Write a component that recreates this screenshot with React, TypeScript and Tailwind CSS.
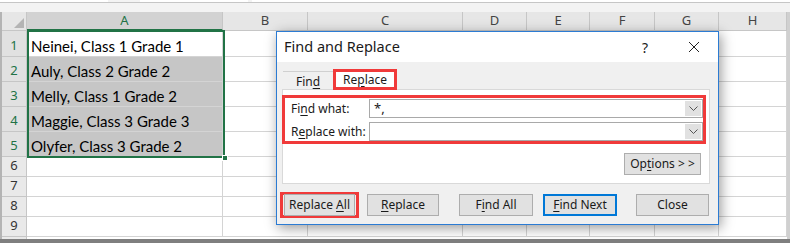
import type { ReactNode } from "react";

const columns = [
    { label: "A", width: 196 },
    { label: "B", width: 85 },
    { label: "C", width: 155 },
    { label: "D", width: 64 },
    { label: "E", width: 63 },
    { label: "F", width: 65 },
    { label: "G", width: 64 },
    { label: "H", width: 68 },
];

const rows = [
    { n: 1, h: 26, text: "Neinei, Class 1 Grade 1" },
    { n: 2, h: 25, text: "Auly, Class 2 Grade 2" },
    { n: 3, h: 25, text: "Melly, Class 1 Grade 2" },
    { n: 4, h: 25, text: "Maggie, Class 3 Grade 3" },
    { n: 5, h: 25, text: "Olyfer, Class 3 Grade 2" },
    { n: 6, h: 20, text: "" },
    { n: 7, h: 20, text: "" },
    { n: 8, h: 20, text: "" },
    { n: 9, h: 20, text: "" },
];

function Key({ children }: { children: ReactNode }) {
    return <span className="underline underline-offset-[2px]">{children}</span>;
}

function Chevron() {
    return (
        <svg width="9" height="6" viewBox="0 0 9 6">
            <path d="M0.5 0.5 L4.5 4.5 L8.5 0.5" fill="none" stroke="#555" strokeWidth="1" />
        </svg>
    );
}

function ComboInput({ value }: { value: string }) {
    return (
        <div className="flex h-[19px] flex-1 items-stretch border border-[#a9a9a9] bg-white">
            <div className="flex-1 pl-[4px] text-[13px] leading-[17px]">{value}</div>
            <div className="my-[1px] mr-[1px] flex w-[16px] items-center justify-center bg-[#e1e1e1]">
                <Chevron />
            </div>
        </div>
    );
}

function DialogButton({
    children,
    className = "",
    border = "border border-[#adadad]",
}: {
    children: ReactNode;
    className?: string;
    border?: string;
}) {
    return (
        <div
            className={`flex h-[22px] items-center justify-center bg-[#e1e1e1] text-[12px] ${border} ${className}`}
        >
            <span className="whitespace-pre">{children}</span>
        </div>
    );
}

function FindReplaceDialog() {
    return (
        <div className="absolute left-[276px] top-[31px] flex h-[194px] w-[443px] flex-col border border-[#2b7bd3] bg-[#f0f0f0] text-[#1a1a1a] shadow-[2px_3px_12px_rgba(0,0,0,0.4)]">
            <div className="flex h-[30px] items-center bg-white pl-[7px] text-[14.5px]">
                <span>Find and Replace</span>
                <span className="ml-auto mr-[40px] text-[14px]">?</span>
                <svg width="12" height="12" viewBox="0 0 12 12" className="mr-[18px]">
                    <path d="M1 1 L11 11 M11 1 L1 11" stroke="#222" strokeWidth="1" />
                </svg>
            </div>

            <div className="mt-[7px] flex h-[20px] items-end pl-[6px] text-[12px]">
                <div className="flex h-[18px] w-[50px] items-center justify-center border-t border-[#d0d0d0] pt-[2px]">
                    <span>
                        Fin<Key>d</Key>
                    </span>
                </div>
                <div className="relative z-10 -mb-[1px] flex h-[21px] w-[64px] items-center justify-center border-[3px] border-[#f03a3a] bg-white">
                    <span>
                        Re<Key>p</Key>lace
                    </span>
                </div>
            </div>

            <div className="ml-[5px] mr-[8px] flex h-[95px] flex-col border border-[#d9d9d9] bg-white">
                <div className="-ml-px mr-[3px] mt-[5px] flex h-[49px] flex-col justify-between border-[3px] border-[#f03a3a] pl-[6px] pt-[1px] text-[12px]">
                    <div className="flex items-center">
                        <span className="w-[78px]">
                            Fi<Key>n</Key>d what:
                        </span>
                        <ComboInput value="*," />
                    </div>
                    <div className="flex items-center">
                        <span className="w-[78px]">
                            R<Key>e</Key>place with:
                        </span>
                        <ComboInput value="" />
                    </div>
                </div>
                <div className="mr-[8px] mt-[9px] flex justify-end">
                    <DialogButton className="h-[21px] w-[77px]">
                        Op<Key>t</Key>ions &gt; &gt;
                    </DialogButton>
                </div>
            </div>

            <div className="mt-[8px] flex items-center">
                <div className="ml-[3px] flex h-[26px] w-[79px] items-center border-[3px] border-[#f03a3a] p-px">
                    <DialogButton className="h-[20px] flex-1">
                        Replace <Key>A</Key>ll
                    </DialogButton>
                </div>
                <DialogButton className="ml-[8px] w-[72px]">
                    <Key>R</Key>eplace
                </DialogButton>
                <DialogButton className="ml-[20px] w-[74px]">
                    F<Key>i</Key>nd All
                </DialogButton>
                <DialogButton className="ml-[10px] w-[74px]" border="border-2 border-[#0078d7]">
                    <Key>F</Key>ind Next
                </DialogButton>
                <DialogButton className="ml-[19px] w-[73px]">Close</DialogButton>
            </div>
        </div>
    );
}

export default function App() {
    return (
        <div
            className="relative flex h-[243px] w-[790px] flex-col overflow-hidden bg-white"
            style={{ fontFamily: '"Noto Sans", sans-serif' }}
        >
            <div className="flex h-[12px] flex-col bg-[#f3f3f3]">
                <div className="flex h-[3px] gap-[4px] border-b border-[#c6c6c6]">
                    <div className="w-[108px] bg-white" />
                    <div className="ml-[28px] w-[108px] bg-white" />
                    <div className="flex-1 bg-white" />
                </div>
            </div>

            <div className="flex flex-1 border-l-2 border-[#b4b4b4]">
                <div className="flex flex-col">
                    <div className="flex h-[19px] text-[13px] text-[#444]">
                        <div className="relative w-[25px] border-b border-r border-[#c6c6c6] bg-[#e6e6e6]">
                            <svg width="10" height="10" viewBox="0 0 10 10" className="absolute bottom-[2px] right-[2px]">
                                <path d="M10 0 L10 10 L0 10 Z" fill="#b4b4b4" />
                            </svg>
                        </div>
                        {columns.map((c) => (
                            <div
                                key={c.label}
                                className={`flex items-center justify-center border-r border-[#c6c6c6] ${
                                    c.label === "A"
                                        ? "border-b-2 border-b-[#217346] bg-[#d2d2d2] text-[#217346]"
                                        : "border-b border-b-[#c6c6c6] bg-[#e6e6e6]"
                                }`}
                                style={{ width: c.width }}
                            >
                                {c.label}
                            </div>
                        ))}
                    </div>

                    {rows.map((r) => (
                        <div key={r.n} className="flex" style={{ height: r.h }}>
                            <div
                                className={`flex w-[25px] items-end justify-center border-b border-r border-[#c6c6c6] pb-[1px] text-[13px] ${
                                    r.n <= 5 ? "bg-[#e1e1e1] text-[#217346]" : "bg-[#e9e9e9] text-[#333]"
                                }`}
                            >
                                {r.n}
                            </div>
                            {columns.map((c) => (
                                <div
                                    key={c.label}
                                    className={`flex items-end border-b border-r border-[#d4d4d4] pb-[1px] pl-[4px] text-[15px] leading-[18px] text-black ${
                                        c.label === "A" && r.n >= 2 && r.n <= 5 ? "bg-[#c6c6c6]" : ""
                                    }`}
                                    style={{ width: c.width, fontFamily: "Lato, sans-serif" }}
                                >
                                    {c.label === "A" ? r.text : ""}
                                </div>
                            ))}
                        </div>
                    ))}
                    <div className="flex flex-1">
                        <div className="w-[25px] border-r border-[#c6c6c6] bg-[#e9e9e9]" />
                    </div>
                </div>
                <div className="w-[3px] bg-[#d0d0d0]" />
            </div>
            <div className="h-[4px] bg-[#7f7f7f]" />

            <div className="absolute left-[27px] top-[30px] h-[128px] w-[198px] border-2 border-[#217346]" />
            <div className="absolute left-[222px] top-[155px] h-[6px] w-[6px] border border-white bg-[#217346]" />

            <FindReplaceDialog />
        </div>
    );
}
